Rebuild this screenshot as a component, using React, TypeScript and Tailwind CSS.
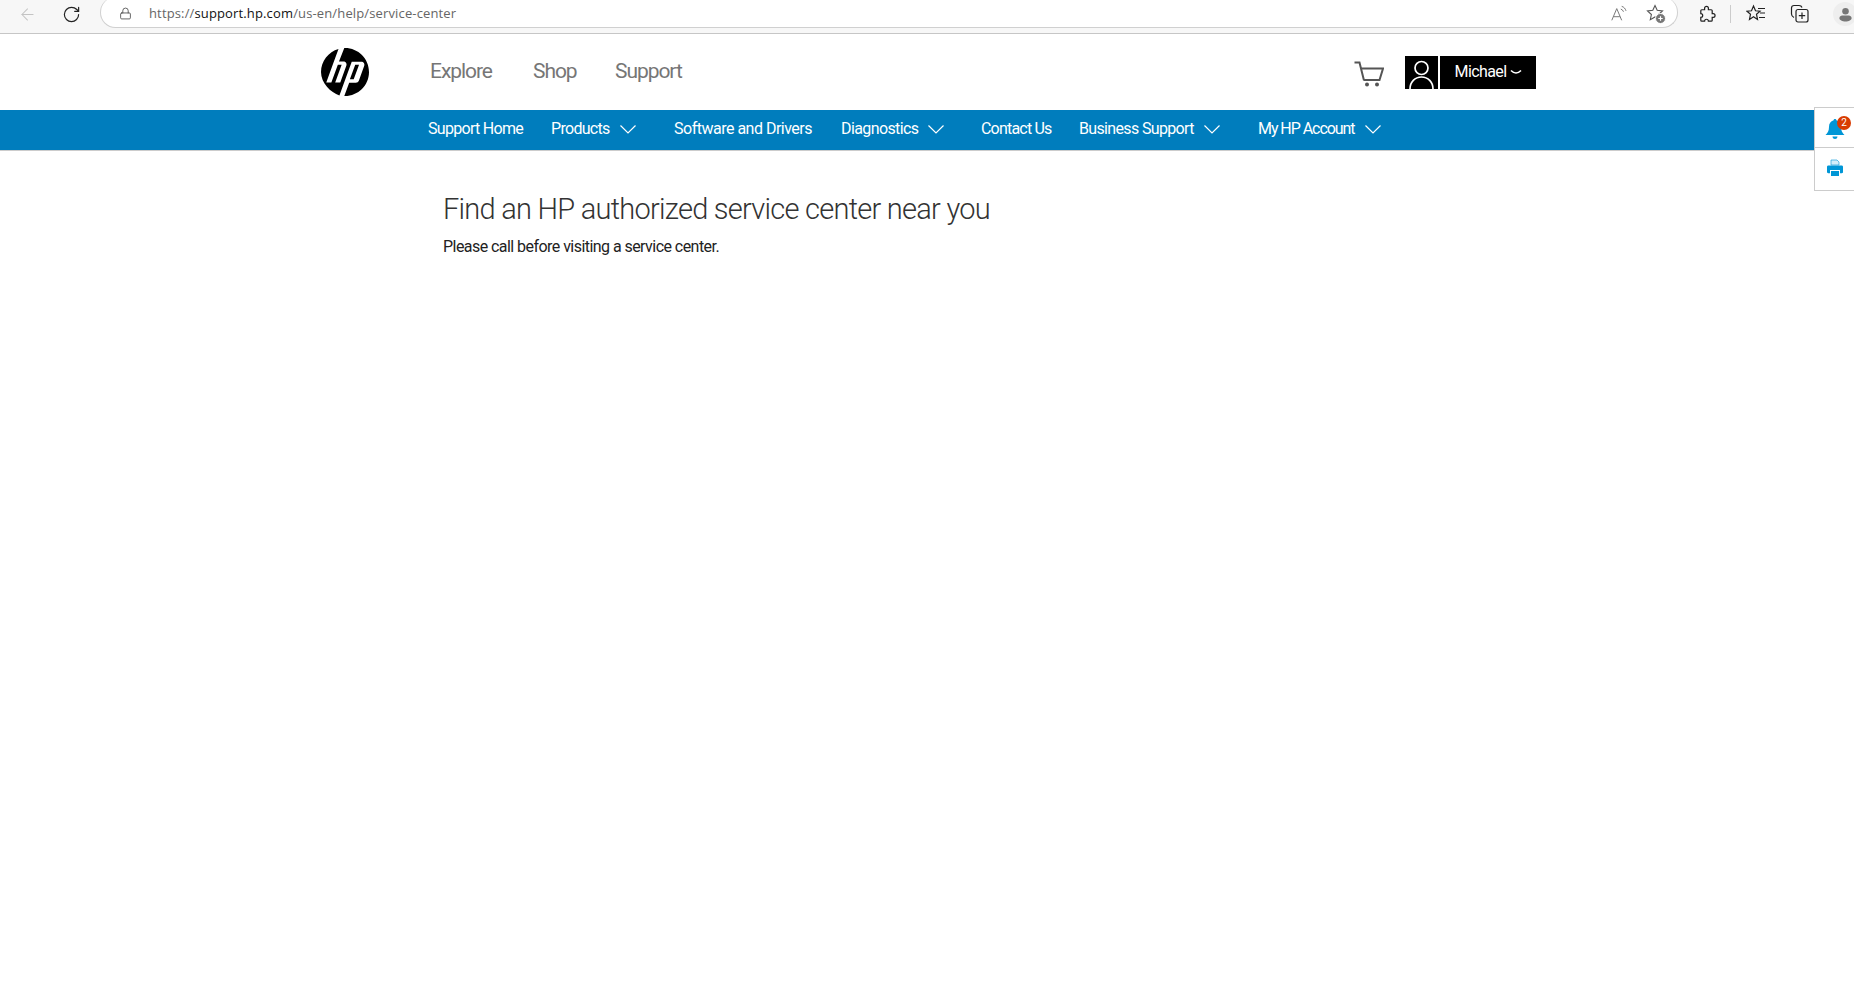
import React from 'react';
import { ArrowLeft, RotateCw, Lock } from 'lucide-react';

// ==========================================
// COMPONENT DATA
// ==========================================

const TOP_LINKS = [
  { label: 'Explore', className: 'w-[103px]' },
  { label: 'Shop', className: 'w-[82px]' },
  { label: 'Support', className: '' },
];

const NAV_ITEMS = [
  { label: 'Support Home', hasMenu: false, className: 'w-[123px] tracking-[-0.7px]' },
  { label: 'Products', hasMenu: true, className: 'w-[123px] tracking-[-0.7px]' },
  { label: 'Software and Drivers', hasMenu: false, className: 'w-[167px] tracking-[-0.5px]' },
  { label: 'Diagnostics', hasMenu: true, className: 'w-[140px] tracking-[-0.6px]' },
  { label: 'Contact Us', hasMenu: false, className: 'w-[98px] tracking-[-0.8px]' },
  { label: 'Business Support', hasMenu: true, className: 'w-[179px] tracking-[-0.65px]' },
  { label: 'My HP Account', hasMenu: true, className: 'tracking-[-1.05px]' },
];

// ==========================================
// ICONS
// ==========================================

const HpLogo = () => (
  <svg viewBox="0 0 24 24" className="w-12 h-12" fill="#000">
    <path d="M12 24h-.36l2.453-6.617h3.376c.593 0 1.244-.456 1.447-1.012l2.662-7.313c.436-1.197-.25-2.177-1.524-2.177h-4.684l-3.93 10.8h-.001l-2.228 6.12C4.877 22.162 0 17.65 0 12 0 6.5 3.703 1.866 8.75.449L6.455 6.757h-.001L2.639 17.243h2.54l3.244-8.912h1.909l-3.244 8.912h2.539l3.024-8.308c.436-1.197-.25-2.177-1.524-2.177H8.993L11.64.005C11.76.002 11.88 0 12 0c6.627 0 12 5.373 12 12s-5.373 12-12 12zm7.02-15.669h-1.909l-2.672 7.342h1.909l2.672-7.342z" />
  </svg>
);

const CartIcon = () => (
  <svg viewBox="0 0 30 26" className="w-[30px] h-[26px] mt-[3px]" fill="none" stroke="#555" strokeWidth="2">
    <path d="M0.5 1.5h5L10 19.500" />
    <path d="M7 7.500h22l-3.500 11.500H10" />
    <circle cx="13" cy="23.500" r="2" fill="#555" stroke="none" />
    <circle cx="23" cy="23.500" r="2" fill="#555" stroke="none" />
  </svg>
);

const AvatarIcon = () => (
  <svg viewBox="0 0 33 33" className="w-[33px] h-[33px]" fill="none" stroke="#fff" strokeWidth="1.7">
    <circle cx="16.500" cy="12" r="6.500" />
    <path d="M5 33c0-7 5-12 11.500-12S28 26 28 33" />
  </svg>
);

const NavChevron = () => (
  <svg viewBox="0 0 16 9" className="ml-[10px] w-[16px] h-[9px] mt-[1px]" fill="none" stroke="#fff" strokeWidth="1.2">
    <path d="M0.500 0.500 8 8 15.500 0.500" />
  </svg>
);

const ReadAloudIcon = () => (
  <svg viewBox="0 0 20 20" className="w-[18px] h-[18px]" fill="none" stroke="#777" strokeWidth="1.1">
    <path d="M2 17 7.500 4 13 17M4 13h7" />
    <path d="M12 4.500c1.500.5 2.500 1.500 3 3M13 1.500c2.500.7 4 2.500 4.800 5" />
  </svg>
);

const StarAddIcon = () => (
  <svg viewBox="0 0 20 20" className="w-[20px] h-[20px]" fill="none" stroke="#555" strokeWidth="1.1">
    <path d="M9 1.500 11.200 6.300 16.500 6.900 12.600 10.500 13.700 15.700 9 13 4.300 15.700 5.400 10.500 1.500 6.900 6.800 6.300z" />
    <circle cx="14.500" cy="14.500" r="5" fill="#777" stroke="#fff" strokeWidth="1" />
    <path d="M14.500 12.300v4.400M12.300 14.500h4.400" stroke="#fff" strokeWidth="1.2" />
  </svg>
);

const PuzzleIcon = () => (
  <svg viewBox="0 0 20 20" className="w-[19px] h-[19px]" fill="none" stroke="#222" strokeWidth="1.3">
    <path d="M8 3.500a2 2 0 0 1 4 0V5h3a1 1 0 0 1 1 1v3h1a2 2 0 0 1 0 4h-1v3a1 1 0 0 1-1 1h-3a2 2 0 0 0-4 0H5a1 1 0 0 1-1-1v-3a2 2 0 0 0 0-4V6a1 1 0 0 1 1-1h3z" />
  </svg>
);

const FavoritesIcon = () => (
  <svg viewBox="0 0 20 20" className="w-[20px] h-[20px]" fill="none" stroke="#222" strokeWidth="1.2">
    <path d="M7.500 2 9.500 6.800 14 7.200 10.500 10.200 11.500 15.500 7.500 12.800 3.500 15.500 4.500 10.200 1 7.200 5.500 6.800z" />
    <path d="M12 4.500h7M14 9h5M13 13.500h6" />
  </svg>
);

const CollectionsIcon = () => (
  <svg viewBox="0 0 20 20" className="w-[20px] h-[20px]" fill="none" stroke="#222" strokeWidth="1.2">
    <path d="M4 13.500C2 12.500 1.500 11.500 1.500 10V4c0-1.500 1-2.500 2.500-2.500h5c1.500 0 2.500.5 3 2" />
    <rect x="6" y="5.500" width="12" height="12.500" rx="2" />
    <path d="M12 8.500v6.500M8.800 11.700h6.400" />
  </svg>
);

const ProfileIcon = () => (
  <div className="w-[24px] h-[24px] rounded-full bg-[#eeeeee] flex items-center justify-center">
    <svg viewBox="0 0 16 16" className="w-[15px] h-[15px]" fill="#777">
      <circle cx="8" cy="4.500" r="3.500" />
      <path d="M1.500 12c0-2 1.500-3 3-3h7c1.500 0 3 1 3 3 0 2-3 3.500-6.500 3.500S1.500 14 1.500 12z" />
    </svg>
  </div>
);

const BellIcon = () => (
  <svg viewBox="0 0 20 22" className="w-[20px] h-[22px] mt-[2px]" fill="#0096d6">
    <path d="M10 1c.8 0 1.300.5 1.400 1.200C14.500 3 16 5.500 16 9c0 4 1.500 6 3.500 8H.5C2.500 15 4 13 4 9c0-3.500 1.500-6 4.600-6.800C8.700 1.500 9.200 1 10 1z" />
    <path d="M7.500 18.500h5C12.300 20.300 11.300 21 10 21s-2.300-.7-2.500-2.500z" />
  </svg>
);

const PrinterIcon = () => (
  <svg viewBox="0 0 18 18" className="w-[18px] h-[18px]" fill="#0096d6">
    <path d="M5 1h6l2 2v3H5z" stroke="#0096d6" strokeWidth="0.6" fill="#d4eefa" />
    <path d="M2.500 6.500h13c1 0 1.500.5 1.500 1.500v5c0 .8-.5 1.200-1.200 1.200H14V11H4v3.200H2.200C1.500 14.200 1 13.800 1 13V8c0-1 .5-1.500 1.500-1.500z" />
    <path d="M5 12h8v5H5z" />
  </svg>
);

// ==========================================
// SECTIONS
// ==========================================

const BrowserBar: React.FC = () => (
  <div className="h-[34px] bg-[#f7f7f7] border-b border-[#c6c6c6] flex items-center pb-[5px] font-['Open_Sans',sans-serif]">
    <div className="w-[100px] flex items-center shrink-0">
      <ArrowLeft className="ml-[18px] w-[19px] h-[19px] text-[#c4c4c4]" strokeWidth={1.3} />
      <RotateCw className="ml-[25px] w-[19px] h-[19px] text-[#222]" strokeWidth={1.5} />
    </div>
    <div className="w-[1578px] shrink-0 h-[31px] -mt-[3px] self-start pt-[3px] bg-white rounded-[16px] border-b border-r border-l border-[#d0d0d0] flex items-center">
      <Lock className="ml-[18px] w-[13px] h-[15px] text-[#444]" strokeWidth={1.5} />
      <div className="ml-[17px] text-[13px] tracking-[0.14px] text-[#666]">
        https://<span className="text-[#111]">support.hp.com</span>/us-en/help/service-center
      </div>
      <div className="ml-auto mr-[11px] flex items-center gap-[18px]">
        <ReadAloudIcon />
        <StarAddIcon />
      </div>
    </div>
    <div className="ml-[19px] shrink-0 flex items-center">
      <PuzzleIcon />
      <div className="ml-[14px] w-px h-[18px] bg-[#cccccc]" />
      <div className="ml-[15px]"><FavoritesIcon /></div>
      <div className="ml-[24px]"><CollectionsIcon /></div>
      <div className="ml-[23px]"><ProfileIcon /></div>
    </div>
  </div>
);

const SiteHeader: React.FC = () => (
  <div className="h-[76px] bg-white flex items-center pl-[321px] pr-[318px] font-['Roboto',sans-serif]">
    <HpLogo />
    <nav className="ml-[61px] flex items-center">
      {TOP_LINKS.map((link) => (
        <a key={link.label} className={`${link.className} text-[21px] tracking-[-1.05px] text-[#767676]`}>
          {link.label}
        </a>
      ))}
    </nav>
    <div className="ml-auto flex items-center">
      <CartIcon />
      <div className="ml-[21px] w-[33px] h-[33px] bg-black overflow-hidden"><AvatarIcon /></div>
      <div className="ml-[2px] w-[96px] h-[33px] bg-black flex items-center justify-center text-white text-[16px] tracking-[-0.6px] pl-[1px]">
        Michael
        <svg viewBox="0 0 12 6" className="ml-[4px] w-[12px] h-[6px]" fill="none" stroke="#fff" strokeWidth="1.6">
          <path d="M1 1.500c2 2 3 2.500 5 2.500s3-.5 5-2.500" />
        </svg>
      </div>
    </div>
  </div>
);

const SupportNav: React.FC = () => (
  <div className="h-[41px] bg-[#007dbd] border-b border-[#cccccc] flex items-center pl-[428px] font-['Roboto',sans-serif]">
    {NAV_ITEMS.map((item) => (
      <div key={item.label} className={`${item.className} flex items-center -mt-[2px] text-white text-[16px]`}>
        <span>{item.label}</span>
        {item.hasMenu && <NavChevron />}
      </div>
    ))}
  </div>
);

const SideTools: React.FC = () => (
  <div className="absolute top-[107px] right-0 w-[40px] h-[84px] bg-white border border-r-0 border-[#cccccc] flex flex-col">
    <div className="relative h-[40px] border-b border-[#cccccc] flex items-center justify-center">
      <BellIcon />
      <span className="absolute top-[8px] right-[3px] w-[14px] h-[14px] rounded-full bg-[#d83b01] text-white text-[10px] leading-[14px] text-center font-['Roboto',sans-serif]">2</span>
    </div>
    <div className="flex-1 flex items-center justify-center pb-[3px]">
      <PrinterIcon />
    </div>
  </div>
);

// ==========================================
// MAIN COMPONENT
// ==========================================

const App: React.FC = () => {
  return (
    <div className="relative min-h-[991px] bg-white overflow-hidden">
      <BrowserBar />
      <SiteHeader />
      <SupportNav />
      <SideTools />
      <main className="pl-[443px] pt-[39px] font-['Roboto',sans-serif]">
        <h1 className="text-[29px] leading-[38px] font-light tracking-[-0.75px] text-[#333]">
          Find an HP authorized service center near you
        </h1>
        <p className="mt-[8px] text-[16px] leading-[22px] tracking-[-0.55px] text-[#222]">
          Please call before visiting a service center.
        </p>
      </main>
    </div>
  );
};

export default App;
